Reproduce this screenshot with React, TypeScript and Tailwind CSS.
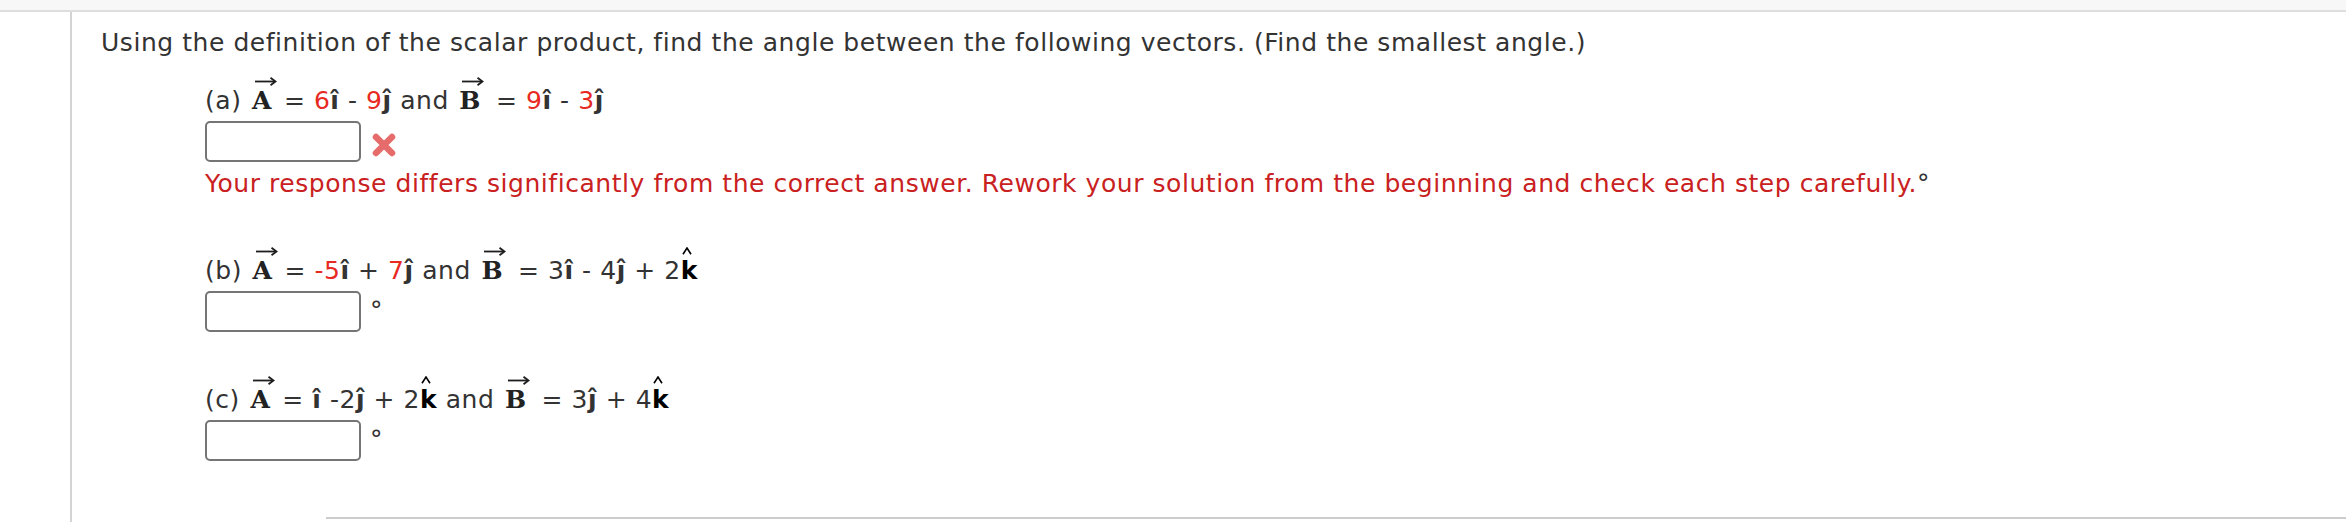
import React from "react";

function Arrow() {
  return (
    <svg
      className="absolute left-[2px] top-[-6px]"
      width="23"
      height="9"
      viewBox="0 0 23 9"
    >
      <path d="M1 4.5 H21" stroke="#1e1e1e" strokeWidth="1.8" fill="none" />
      <path d="M16.5 0.8 L21.5 4.5 L16.5 8.2" stroke="#1e1e1e" strokeWidth="1.8" fill="none" />
    </svg>
  );
}

function Vec({ l }: { l: string }) {
  return (
    <span className="relative ml-[2px] mr-[4px] inline-block font-['DejaVu_Serif',serif] font-bold tracking-normal text-[#222]">
      <Arrow />
      {l}
    </span>
  );
}

function I() {
  return <span className="font-bold text-[#333]">î</span>;
}
function J() {
  return <span className="font-bold text-[#333]">ĵ</span>;
}
function K() {
  return (
    <span className="relative inline-block font-bold text-black">
      <svg
        className="absolute left-[1px] top-[-6px]"
        width="10"
        height="8"
        viewBox="0 0 10 8"
      >
        <path d="M1 7.2 L5 1 L9 7.2" stroke="#000" strokeWidth="1.6" fill="none" />
      </svg>
      k
    </span>
  );
}

function R({ children }: { children: React.ReactNode }) {
  return <span className="text-[#e8291f]">{children}</span>;
}

function Box() {
  return (
    <div className="h-[41px] w-[156px] shrink-0 rounded-[5px] border-2 border-[#757575] bg-white" />
  );
}

function Degree() {
  return <span className="ml-[9px] mt-[2px] leading-[36px] text-[#333]">°</span>;
}

export default function App() {
  return (
    <div className="h-[522px] w-full overflow-hidden bg-white font-['DejaVu_Sans',Verdana,sans-serif] text-[25px] leading-[36px] tracking-[0.55px] text-[#333]">
      <div className="h-[12px] border-b-2 border-[#dedede] bg-[#f7f7f7]" />
      <div className="flex h-[510px]">
        <div className="w-[72px] shrink-0 border-r-2 border-[#d4d4d4]" />
        <div className="flex-1 pl-[29px] pt-[13px]">
          <p className="whitespace-nowrap">
            Using the definition of the scalar product, find the angle between the following vectors. (Find the smallest angle.)
          </p>
          <div className="ml-[104px]">
            <div className="mt-[22px] whitespace-nowrap">
              (a) <Vec l="A" /> = <R>6</R>
              <I /> - <R>9</R>
              <J /> and <Vec l="B" />{" "}
              <span className="ml-[3px]">=</span> <R>9</R>
              <I /> - <R>3</R>
              <J />
            </div>
            <div className="mt-[2px] flex items-start">
              <Box />
              <svg
                className="ml-[10px] mt-[11px] opacity-80"
                width="26"
                height="26"
                viewBox="0 0 26 26"
              >
                <path
                  d="M5 5 L21 21 M21 5 L5 21"
                  stroke="#e04848"
                  strokeWidth="6.5"
                  strokeLinecap="round"
                  fill="none"
                />
              </svg>
            </div>
            <div className="mt-[4px] whitespace-nowrap text-[#c92121]">
              Your response differs significantly from the correct answer. Rework your solution from the beginning and check each step carefully.
              <span className="text-[#333]">°</span>
            </div>
            <div className="mt-[51px] whitespace-nowrap">
              (b) <Vec l="A" /> = <R>-5</R>
              <I /> + <R>7</R>
              <J /> and <Vec l="B" />{" "}
              <span className="ml-[3px]">=</span> 3<I /> - 4<J /> + 2<K />
            </div>
            <div className="mt-[2px] flex items-start">
              <Box />
              <Degree />
            </div>
            <div className="mt-[50px] whitespace-nowrap">
              (c) <Vec l="A" /> = <I /> -2<J /> + 2<K /> and <Vec l="B" />{" "}
              <span className="ml-[3px]">=</span> 3<J /> + 4<K />
            </div>
            <div className="mt-[2px] flex items-start">
              <Box />
              <Degree />
            </div>
          </div>
          <div className="ml-[225px] mt-[56px] border-t-2 border-[#cccccc]" />
        </div>
      </div>
    </div>
  );
}
